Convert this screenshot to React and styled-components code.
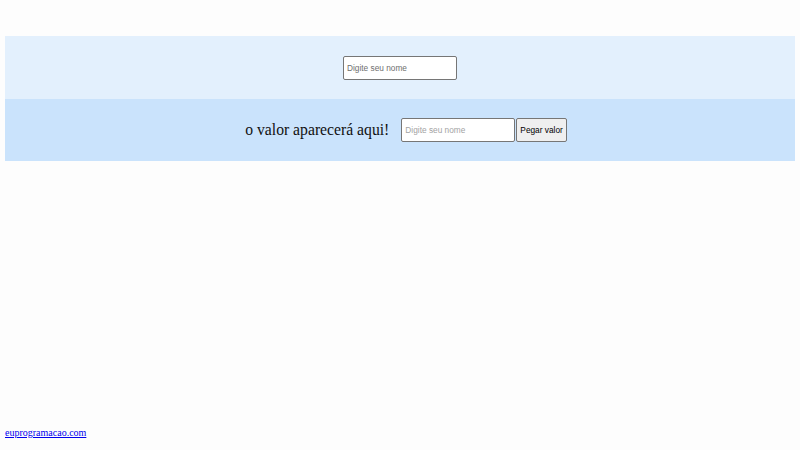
import React from 'react';
import styled, { createGlobalStyle } from 'styled-components';

const GlobalStyle = createGlobalStyle`
	html, body {
		margin: 0;
		padding: 0;
		background: #fdfdfd;
	}
	body {
		font-family: "Liberation Serif", "Times New Roman", serif;
	}
`;

const Page = styled.div`
	min-height: 450px;
	box-sizing: border-box;
	padding: 36px 5px 12px;
	display: flex;
	flex-direction: column;
`;

const Band = styled.section`
	background: ${({ tone }) => tone};
	height: ${({ h }) => h}px;
	padding-left: ${({ shift }) => shift || 0}px;
	display: flex;
	align-items: center;
	justify-content: center;
`;

const Label = styled.span`
	font-size: 15.7px;
	color: #111;
	margin-right: 12px;
`;

const Field = styled.input`
	width: 114px;
	height: 24px;
	box-sizing: border-box;
	border: 1px solid #767676;
	border-radius: 2px;
	padding: 1px 3px;
	font-family: "Liberation Sans", Arial, sans-serif;
	font-size: 8.3px;
	background: #fff;
	&::placeholder {
		color: ${({ faint }) => (faint ? '#a3a3a3' : '#6f6f6f')};
	}
`;

const Button = styled.button`
	height: 24px;
	box-sizing: border-box;
	margin-left: 1px;
	padding: 1px 3px;
	border: 1px solid #767676;
	border-radius: 2px;
	background: #efefef;
	font-family: "Liberation Sans", Arial, sans-serif;
	font-size: 8.3px;
	color: #000;
`;

const Footer = styled.a`
	margin-top: auto;
	font-family: "Liberation Serif", "Times New Roman", serif;
	font-size: 10px;
	color: #0000ee;
	text-decoration: underline;
	align-self: flex-start;
`;

const App = () => {
	return (
		<>
			<GlobalStyle />
			<Page>
				<Band tone="#e3f0fd" h={63}>
					<Field placeholder="Digite seu nome" />
				</Band>
				<Band tone="#cae3fc" h={62} shift={12}>
					<Label>o valor aparecerá aqui!</Label>
					<Field faint placeholder="Digite seu nome" />
					<Button>Pegar valor</Button>
				</Band>
				<Footer href="#">euprogramacao.com</Footer>
			</Page>
		</>
	);
};

export default App;
